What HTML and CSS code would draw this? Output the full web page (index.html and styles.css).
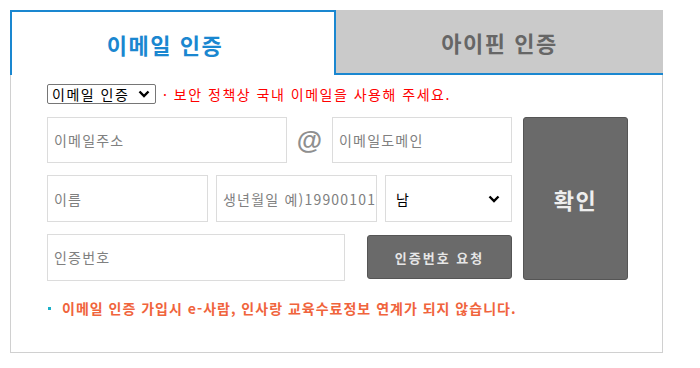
FILE: index.html
```html
<!DOCTYPE html>
<html lang="ko">
<head>
    <meta charset="UTF-8">
    <meta name="viewport" content="width=device-width, initial-scale=1.0">
    <title>본인 인증</title>
    <link rel="stylesheet" href="styles.css">
</head>
<body>

<div class="auth-box">
    <div class="auth-tabs">
        <div class="auth-tab active">이메일 인증</div>
        <div class="auth-tab">아이핀 인증</div>
    </div>

    <div class="auth-body">
        <div class="auth-type">
            <select class="type-select">
                <option>이메일 인증</option>
                <option>아이핀 인증</option>
            </select>
            <span class="type-notice">· 보안 정책상 국내 이메일을 사용해 주세요.</span>
        </div>

        <div class="auth-form">
            <div class="auth-fields">
                <div class="field-row">
                    <input type="text" class="field email-id" placeholder="이메일주소">
                    <span class="at-mark">@</span>
                    <input type="text" class="field email-domain" placeholder="이메일도메인">
                </div>
                <div class="field-row gap-row">
                    <input type="text" class="field user-name" placeholder="이름">
                    <input type="text" class="field user-birth" placeholder="생년월일 예)19900101">
                    <select class="field user-sex">
                        <option>남</option>
                        <option>여</option>
                    </select>
                </div>
                <div class="field-row">
                    <input type="text" class="field auth-code" placeholder="인증번호">
                    <button type="button" class="btn-request">인증번호 요청</button>
                </div>
            </div>
            <button type="button" class="btn-confirm">확인</button>
        </div>

        <p class="auth-note">이메일 인증 가입시 e-사람, 인사랑 교육수료정보 연계가 되지 않습니다.</p>
    </div>
</div>

</body>
</html>
```

FILE: styles.css
```css
body {
    margin: 0;
    font-family: "Noto Sans CJK KR", "Noto Sans", sans-serif;
    background: #fff;
}
.auth-box {
    width: 653px;
    margin: 10px 0 0 10px;
    box-sizing: border-box;
    border: 1px solid #d0d0d0;
    border-top: none;
}
.auth-tabs {
    display: flex;
    margin: 0 -1px;
}
.auth-tab {
    flex: 0 0 327px;
    height: 65px;
    box-sizing: border-box;
    display: flex;
    align-items: center;
    justify-content: center;
    font-size: 22px;
    font-weight: bold;
    letter-spacing: 1.5px;
    color: #666;
    background: #cacaca;
    border-bottom: 2px solid #1a87d0;
}
.auth-tab.active {
    flex-basis: 326px;
    padding-right: 16px;
    color: #1a87d0;
    background: #fff;
    border: 2px solid #1a87d0;
    border-bottom: none;
}
.auth-body {
    padding: 9px 0 0 36px;
}
.auth-type {
    display: flex;
    align-items: center;
    height: 20px;
}
.type-select {
    width: 109px;
    height: 20px;
    appearance: none;
    font-family: "Noto Sans CJK KR", sans-serif;
    font-size: 14px;
    letter-spacing: 1.5px;
    line-height: 18px;
    padding: 0 0 0 4px;
    border: 1px solid #767676;
    border-radius: 2px;
    color: #000;
    background: #fff url("data:image/svg+xml,%3Csvg xmlns='http://www.w3.org/2000/svg' width='12' height='8' viewBox='0 0 12 8'%3E%3Cpath d='M1.5 1.5 6 6l4.5-4.5' fill='none' stroke='%23000' stroke-width='2.4'/%3E%3C/svg%3E") no-repeat right 5px center;
}
.type-notice {
    margin-left: 7px;
    font-size: 14px;
    letter-spacing: 1.5px;
    color: #f00;
}
.auth-form {
    display: flex;
    margin-top: 13px;
}
.auth-fields {
    width: 465px;
    display: flex;
    flex-direction: column;
    gap: 12px;
}
.field-row {
    display: flex;
    align-items: center;
    height: 46px;
}
.gap-row {
    gap: 8px;
    height: 47px;
}
.field {
    height: 100%;
    box-sizing: border-box;
    border: 1px solid #dcdcdc;
    padding: 0 0 0 6px;
    font-family: "Noto Sans CJK KR", sans-serif;
    font-size: 14px;
    letter-spacing: 1.2px;
    color: #333;
    outline: none;
    background: #fff;
}
.field::placeholder {
    color: #808080;
}
.email-id {
    width: 240px;
}
.at-mark {
    width: 45px;
    text-align: center;
    font-family: "Liberation Sans", Arial, sans-serif;
    font-size: 26px;
    font-weight: bold;
    color: #8f8f8f;
}
.email-domain {
    width: 180px;
}
.user-name, .user-birth {
    width: 161px;
}
.user-sex {
    width: 127px;
    appearance: none;
    padding-left: 10px;
    color: #000;
    background: #fff url("data:image/svg+xml,%3Csvg xmlns='http://www.w3.org/2000/svg' width='12' height='8' viewBox='0 0 12 8'%3E%3Cpath d='M1.5 1.5 6 6l4.5-4.5' fill='none' stroke='%23000' stroke-width='2.4'/%3E%3C/svg%3E") no-repeat right 11px center;
}
.auth-code {
    width: 298px;
    height: 47px;
}
.btn-request {
    width: 145px;
    height: 44px;
    margin-left: 22px;
    background: #6a6a6a;
    border: 1px solid #555;
    border-radius: 3px;
    color: #e6e6e6;
    font-family: "Noto Sans CJK KR", sans-serif;
    font-size: 13px;
    font-weight: bold;
    letter-spacing: 2px;
    cursor: pointer;
}
.btn-confirm {
    width: 105px;
    height: 163px;
    margin-left: 11px;
    background: #6a6a6a;
    border: 1px solid #555;
    border-radius: 3px;
    color: #eee;
    font-family: "Noto Sans CJK KR", sans-serif;
    font-size: 22px;
    font-weight: bold;
    letter-spacing: 1.5px;
    cursor: pointer;
}
.auth-note {
    position: relative;
    margin: 18px 0 0 0;
    padding: 0 0 34px 15px;
    font-size: 14px;
    font-weight: bold;
    letter-spacing: 1px;
    color: #f0643c;
}
.auth-note::before {
    content: "";
    position: absolute;
    left: 1px;
    top: 9px;
    width: 3px;
    height: 3px;
    background: #1ab0c8;
}
```
